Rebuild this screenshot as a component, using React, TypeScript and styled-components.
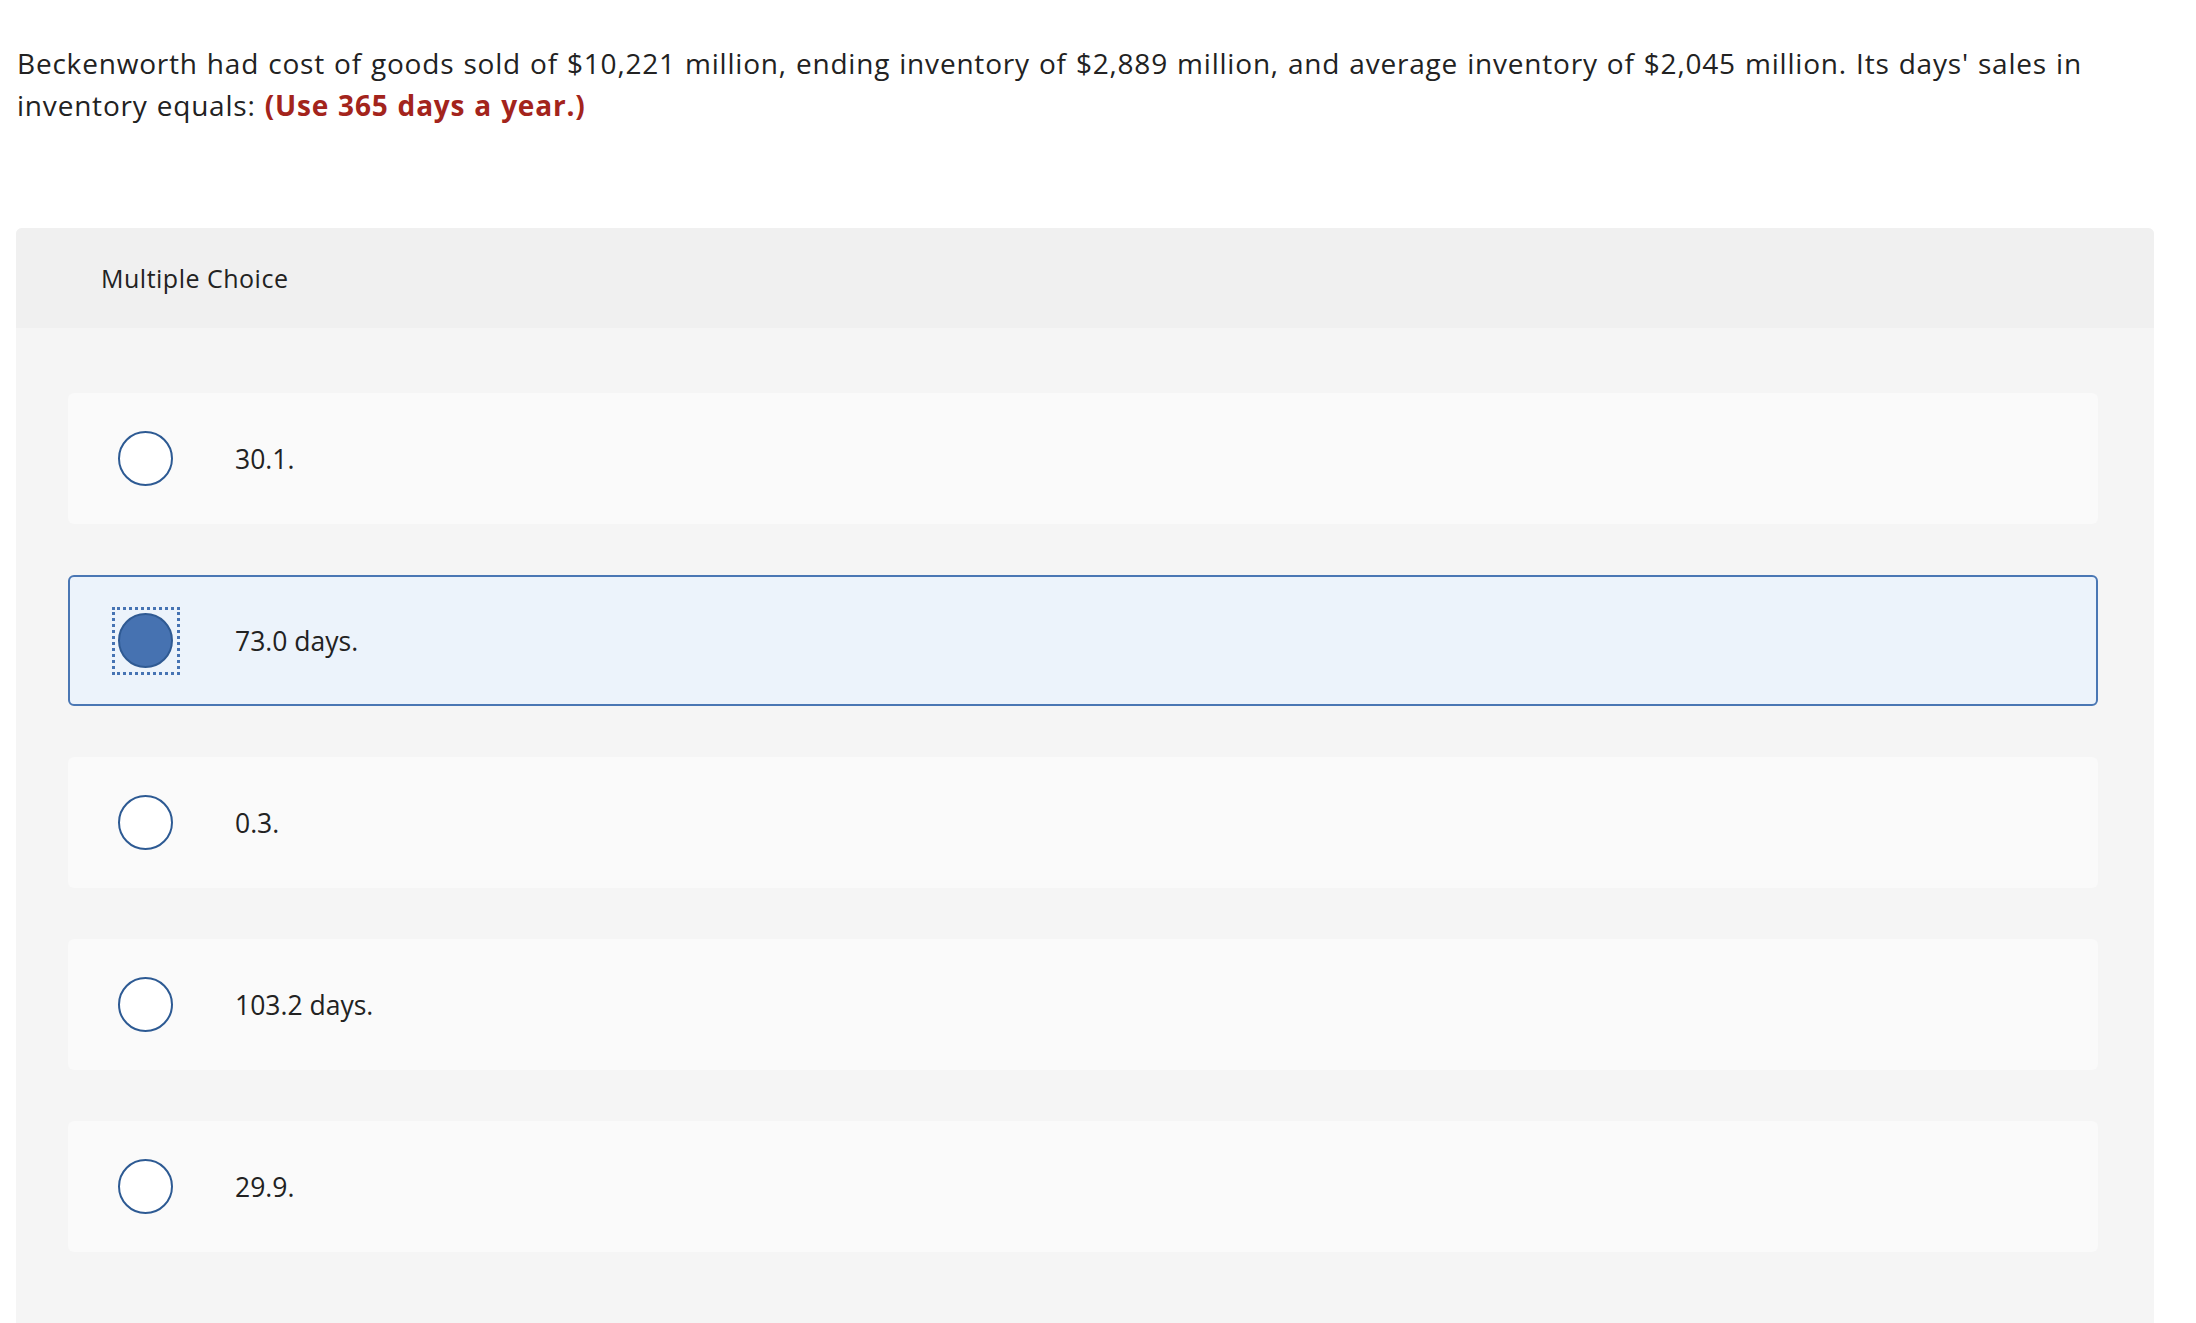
import React from "react";
import styled, { createGlobalStyle } from "styled-components";

const GlobalStyle = createGlobalStyle`
  html, body {
    margin: 0;
    padding: 0;
    background: #ffffff;
    font-family: "Open Sans", "Lato", "Liberation Sans", sans-serif;
    color: #222222;
  }
  * { box-sizing: border-box; }
`;

const Page = styled.div`
  display: flex;
  flex-direction: column;
  padding: 0 42px 0 16px;
  height: 1323px;
  overflow: hidden;
`;

const Question = styled.p`
  margin: 0;
  padding: 42px 0 0 1px;
  font-size: 28px;
  line-height: 42px;
  letter-spacing: 0.8px;
  word-spacing: 1px;
  color: #222222;
`;

const Hint = styled.strong`
  color: #a3241c;
  font-weight: 700;
`;

const Panel = styled.section`
  margin-top: 102px;
  background: #f5f5f5;
  border-radius: 6px 6px 0 0;
  flex: 1;
  display: flex;
  flex-direction: column;
`;

const PanelHeader = styled.header`
  height: 100px;
  background: #f0f0f0;
  border-radius: 6px 6px 0 0;
  display: flex;
  align-items: center;
  padding-left: 85px;
  font-size: 25px;
  letter-spacing: 0.5px;
  color: #222222;
`;

const Choices = styled.div`
  display: flex;
  flex-direction: column;
  gap: 51px;
  padding: 65px 56px 64px 52px;
`;

const Choice = styled.label<{ $selected?: boolean }>`
  height: 131px;
  display: flex;
  align-items: center;
  padding-left: ${(p) => (p.$selected ? "48px" : "50px")};
  border-radius: 6px;
  background: ${(p) => (p.$selected ? "#ecf3fb" : "#fafafa")};
  border: ${(p) => (p.$selected ? "2px solid #4a77b4" : "none")};
  cursor: pointer;
`;

const RadioSlot = styled.span`
  width: 55px;
  height: 55px;
  display: flex;
  align-items: center;
  justify-content: center;
  flex-shrink: 0;
`;

const FocusRing = styled.span`
  display: flex;
  align-items: center;
  justify-content: center;
  width: 68px;
  height: 68px;
  flex-shrink: 0;
  border: 3px dotted #4673b3;
`;

const Radio = styled.span<{ $checked?: boolean }>`
  display: block;
  width: 55px;
  height: 55px;
  border-radius: 50%;
  flex-shrink: 0;
  border: 2px solid ${(p) => (p.$checked ? "#2f5a93" : "#2d5a93")};
  background: ${(p) => (p.$checked ? "#4672b1" : "#ffffff")};
`;

const ChoiceText = styled.span`
  margin-left: 62px;
  font-size: 26.5px;
  color: #222222;
`;

const options = [
  { text: "30.1.", selected: false },
  { text: "73.0 days.", selected: true },
  { text: "0.3.", selected: false },
  { text: "103.2 days.", selected: false },
  { text: "29.9.", selected: false },
];

export default function App() {
  return (
    <>
      <GlobalStyle />
      <Page>
        <Question>
          Beckenworth had cost of goods sold of $10,221 million, ending inventory of $2,889 million, and average
          inventory of $2,045 million. Its days' sales in
          <br />
          inventory equals: <Hint>(Use 365 days a year.)</Hint>
        </Question>
        <Panel>
          <PanelHeader>Multiple Choice</PanelHeader>
          <Choices>
            {options.map((o) => (
              <Choice key={o.text} $selected={o.selected}>
                {o.selected ? (
                  <RadioSlot>
                    <FocusRing>
                      <Radio $checked />
                    </FocusRing>
                  </RadioSlot>
                ) : (
                  <RadioSlot>
                    <Radio />
                  </RadioSlot>
                )}
                <ChoiceText>{o.text}</ChoiceText>
              </Choice>
            ))}
          </Choices>
        </Panel>
      </Page>
    </>
  );
}
